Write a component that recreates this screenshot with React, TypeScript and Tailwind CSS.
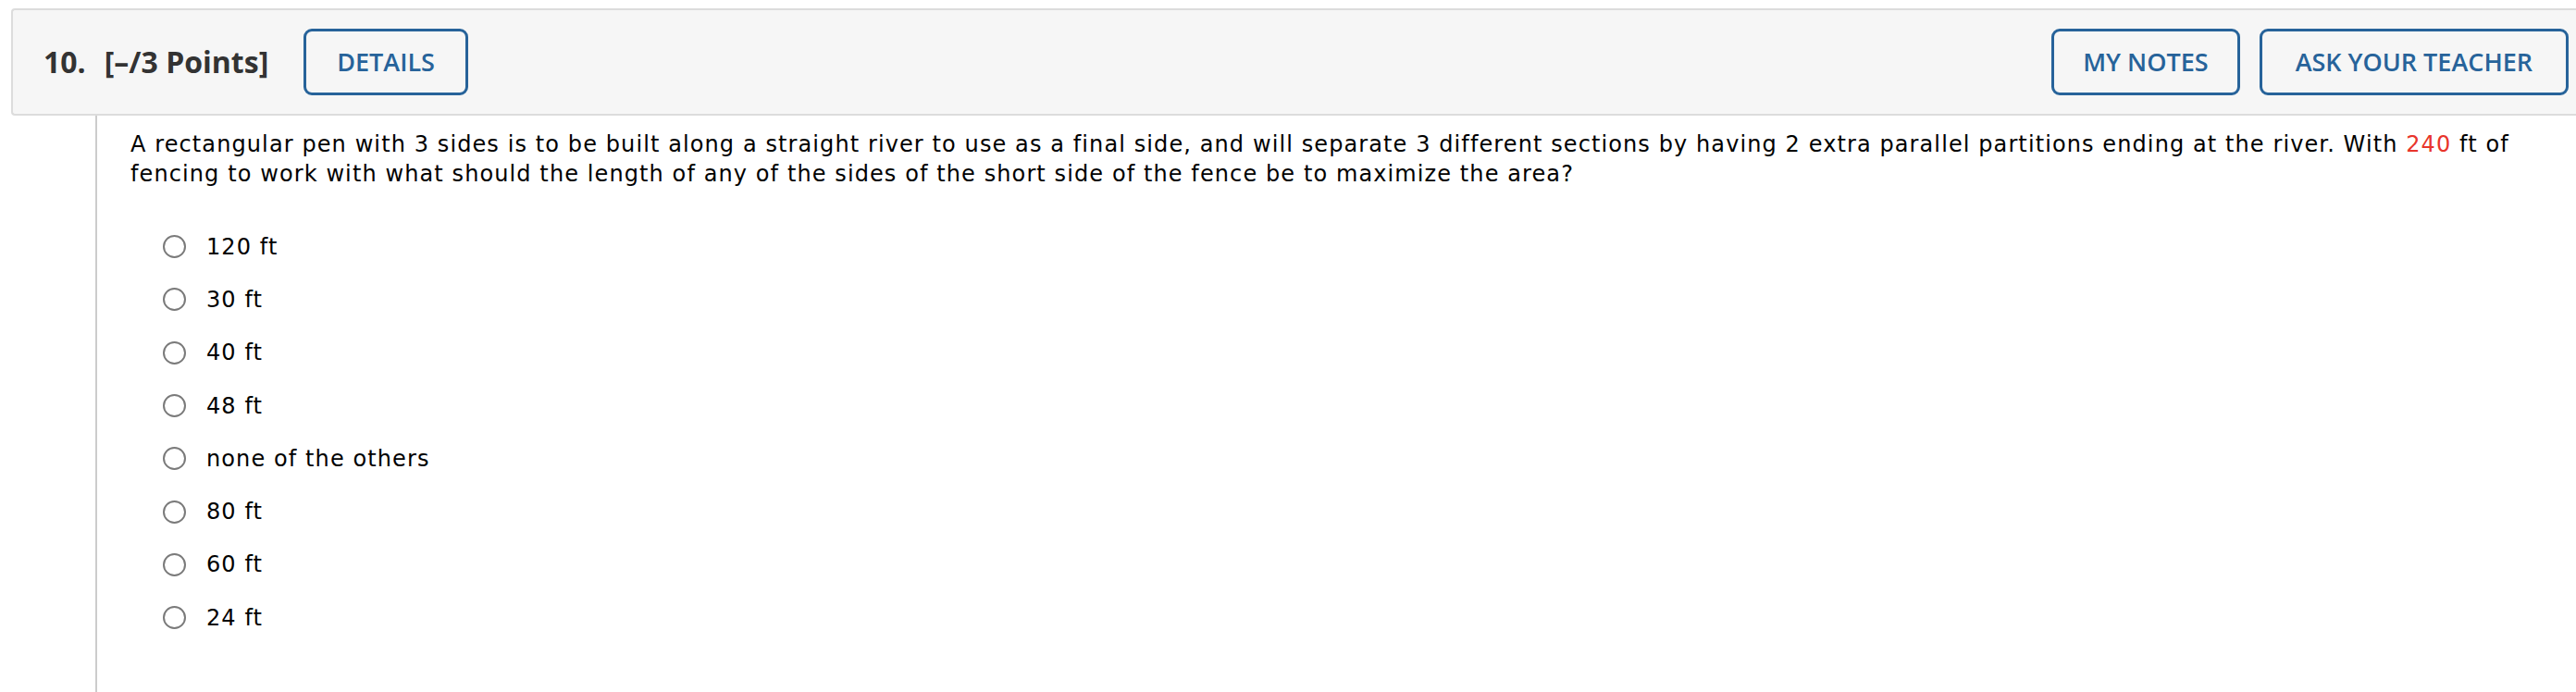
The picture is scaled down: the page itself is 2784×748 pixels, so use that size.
import React from 'react';

const OPTIONS = ['120 ft', '30 ft', '40 ft', '48 ft', 'none of the others', '80 ft', '60 ft', '24 ft'];

function HeaderButton({ label, pad }: { label: string; pad: string }) {
  return (
    <button
      type="button"
      className={`h-[72px] rounded-[9px] border-[3px] border-[#27639a] bg-transparent text-[27px] font-semibold text-[#27639a] ${pad}`}
      style={{ fontFamily: '"Open Sans", sans-serif' }}
    >
      {label}
    </button>
  );
}

export default function App() {
  return (
    <div className="h-[748px] w-[2784px] overflow-hidden bg-white">
      {/* Question header */}
      <div
        className="ml-[12px] mt-[9px] flex h-[116px] items-center rounded-l-[4px] border-2 border-r-0 border-[#dcdcdc] bg-[#f6f6f6] pl-[33px] pr-[8px]"
        style={{ fontFamily: '"Open Sans", sans-serif' }}
      >
        <span className="text-[32px] font-bold text-[#333333]">10.</span>
        <span className="ml-[20px] text-[32px] font-bold text-[#333333]">[–/3 Points]</span>
        <div className="ml-[38px]">
          <HeaderButton label="DETAILS" pad="px-[33px]" />
        </div>
        <div className="ml-auto flex gap-[21px]">
          <HeaderButton label="MY NOTES" pad="px-[31px]" />
          <HeaderButton label="ASK YOUR TEACHER" pad="px-[36px]" />
        </div>
      </div>

      {/* Question body */}
      <div className="ml-[103px] h-[623px] border-l-2 border-[#cccccc]">
        <div
          className="pl-[36px] pr-[40px] pt-[15px] text-[24px] leading-[32px] tracking-[1.1px] text-black"
          style={{ fontFamily: '"DejaVu Sans", Verdana, sans-serif' }}
        >
          <p>
            A rectangular pen with 3 sides is to be built along a straight river to use as a final side, and will
            separate 3 different sections by having 2 extra parallel partitions ending at the river. With{' '}
            <span className="text-[#e8352b]">240</span> ft of fencing to work with what should the length of any of the
            sides of the short side of the fence be to maximize the area?
          </p>

          <div className="mt-[34px] flex flex-col pl-[35px]">
            {OPTIONS.map((opt) => (
              <label key={opt} className="flex h-[57.3px] items-center">
                <span className="h-[25px] w-[25px] shrink-0 rounded-full border-2 border-[#7a7a7a] bg-white" />
                <span className="ml-[22px]">{opt}</span>
              </label>
            ))}
          </div>
        </div>
      </div>
    </div>
  );
}
